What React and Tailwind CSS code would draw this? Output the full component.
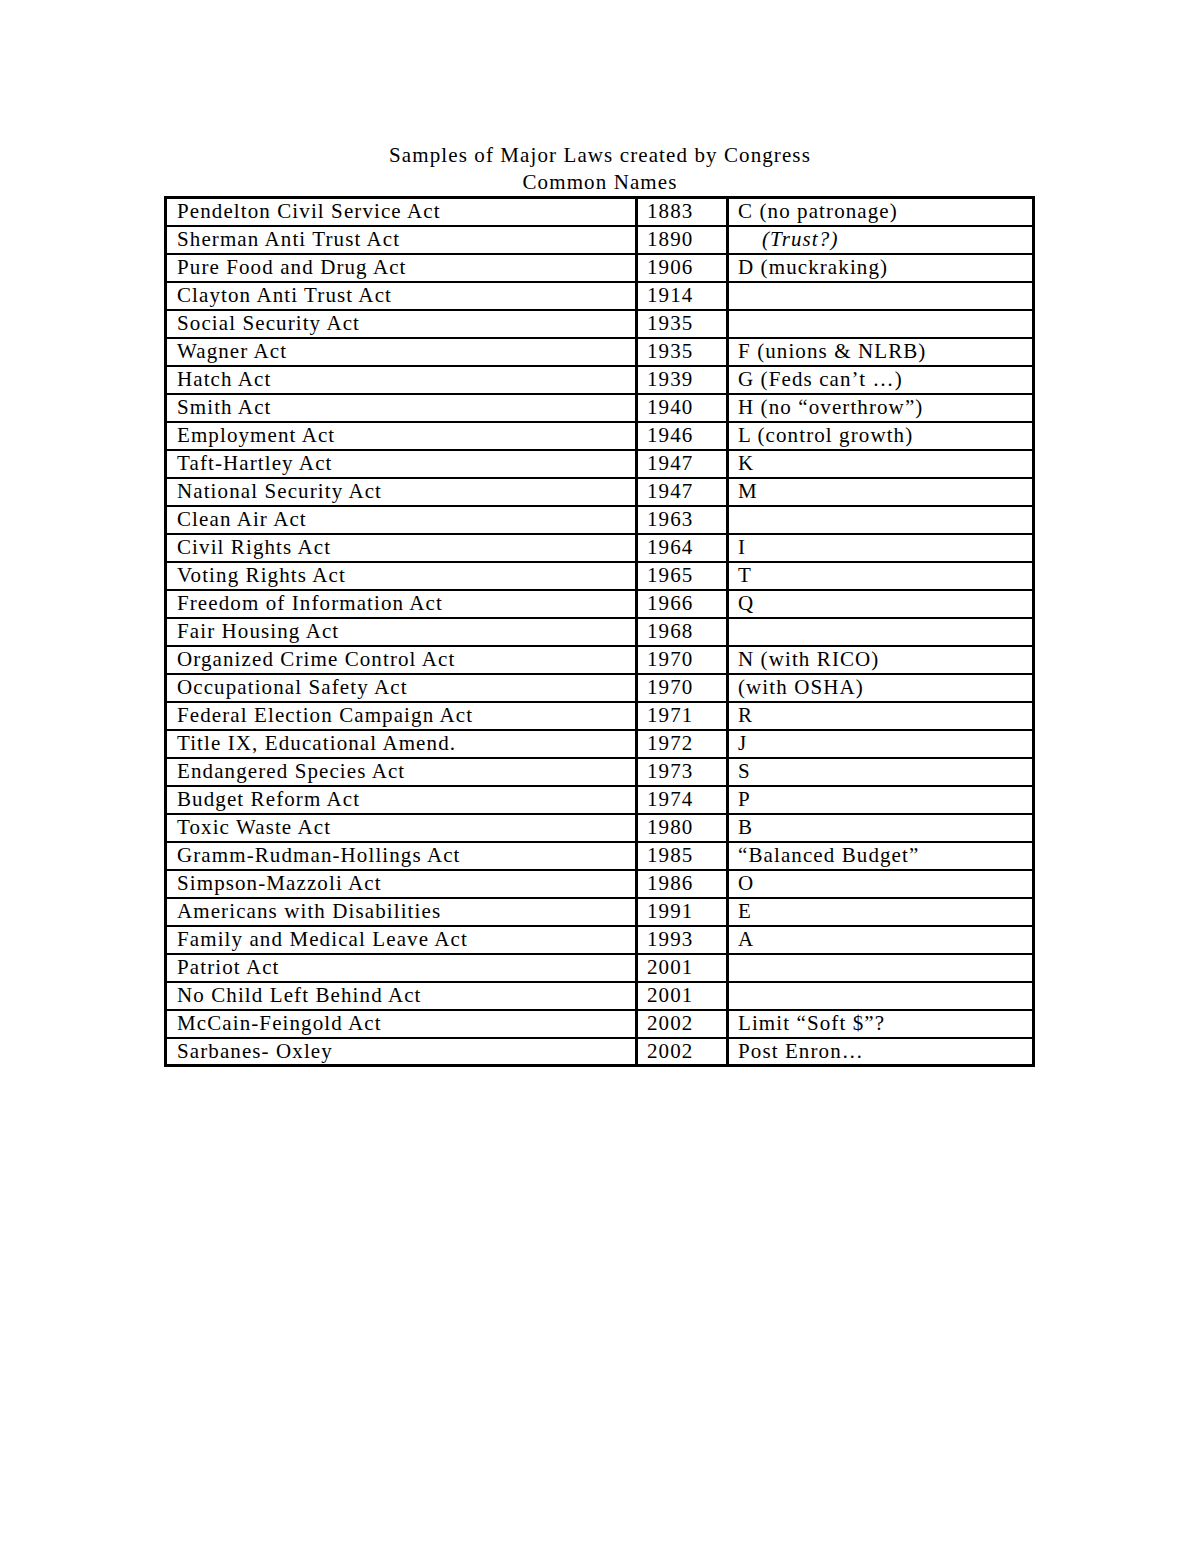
import React from 'react'

const rows = [
    ['Pendelton Civil Service Act', '1883', 'C (no patronage)'],
    ['Sherman Anti Trust Act', '1890', '(Trust?)', true],
    ['Pure Food and Drug Act', '1906', 'D (muckraking)'],
    ['Clayton Anti Trust Act', '1914', ''],
    ['Social Security Act', '1935', ''],
    ['Wagner Act', '1935', 'F (unions & NLRB)'],
    ['Hatch Act', '1939', 'G (Feds can\u2019t \u2026)'],
    ['Smith Act', '1940', 'H (no \u201coverthrow\u201d)'],
    ['Employment Act', '1946', 'L (control growth)'],
    ['Taft-Hartley Act', '1947', 'K'],
    ['National Security Act', '1947', 'M'],
    ['Clean Air Act', '1963', ''],
    ['Civil Rights Act', '1964', 'I'],
    ['Voting Rights Act', '1965', 'T'],
    ['Freedom of Information Act', '1966', 'Q'],
    ['Fair Housing Act', '1968', ''],
    ['Organized Crime Control Act', '1970', 'N (with RICO)'],
    ['Occupational Safety Act', '1970', '(with OSHA)'],
    ['Federal Election Campaign Act', '1971', 'R'],
    ['Title IX, Educational Amend.', '1972', 'J'],
    ['Endangered Species Act', '1973', 'S'],
    ['Budget Reform Act', '1974', 'P'],
    ['Toxic Waste Act', '1980', 'B'],
    ['Gramm-Rudman-Hollings Act', '1985', '\u201cBalanced Budget\u201d'],
    ['Simpson-Mazzoli Act', '1986', 'O'],
    ['Americans with Disabilities', '1991', 'E'],
    ['Family and Medical Leave Act', '1993', 'A'],
    ['Patriot Act', '2001', ''],
    ['No Child Left Behind Act', '2001', ''],
    ['McCain-Feingold Act', '2002', 'Limit \u201cSoft $\u201d?'],
    ['Sarbanes- Oxley', '2002', 'Post Enron\u2026'],
]

const App = () => {
    return (
        <div className="w-[1200px] h-[1553px] bg-white text-black font-['Liberation_Serif',serif]">
            <div className="pt-[142px] flex flex-col items-center">
                <p className="text-[21px] leading-[27px] tracking-[1.1px]">Samples of Major Laws created by Congress</p>
                <p className="text-[21px] leading-[27px] tracking-[1.1px]">Common Names</p>
            </div>
            <div className="pl-[164px]">
                <table className="w-[871px] border-collapse border-[3px] border-black text-[21px] tracking-[1.1px]">
                    <tbody>
                        {rows.map(([name, year, note, italic], i) => (
                            <tr key={i} className="h-[28px]">
                                <td className="w-[471px] border-y-2 border-r-[3px] border-black pl-[10px] py-0 leading-[23px] whitespace-nowrap">{name}</td>
                                <td className="w-[91px] border-y-2 border-r-[3px] border-black pl-[9px] py-0 leading-[23px]">{year}</td>
                                <td className="border-y-2 border-black pl-[9px] py-0 leading-[23px] whitespace-nowrap">
                                    {italic ? <span className="italic pl-[24px]">{note}</span> : note}
                                </td>
                            </tr>
                        ))}
                    </tbody>
                </table>
            </div>
        </div>
    )
}

export default App
